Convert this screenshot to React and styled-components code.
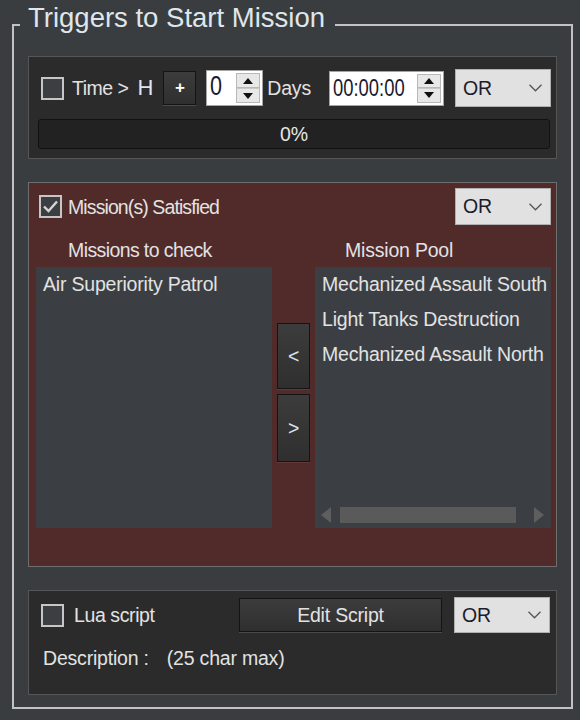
import React from "react";
import styled, { createGlobalStyle } from "styled-components";

const LINE = "#c2c2c2";

const GlobalStyle = createGlobalStyle`
  html, body { margin: 0; padding: 0; background: #3a3d40; }
  body { font-family: "Liberation Sans", Arial, sans-serif; }
  * { box-sizing: border-box; }
`;

const Page = styled.div`
  width: 580px;
  height: 720px;
  background: #3a3d40;
  padding: 3px 7px 0 12px;
  color: #e2e2e2;
  font-size: 19.5px;
  letter-spacing: -0.2px;
  overflow: hidden;
`;

const Header = styled.div`
  display: flex;
  height: 30px;
`;

const Corner = styled.div`
  width: 8px;
  margin-top: 21px;
  border-left: 2px solid ${LINE};
  border-top: 2px solid ${LINE};
`;

const Title = styled.div`
  font-size: 27.5px;
  letter-spacing: 0;
  line-height: 30px;
  padding: 0 10px 0 8px;
  color: #dfe6ec;
  white-space: nowrap;
`;

const RightLine = styled.div`
  flex: 1;
  margin-top: 21px;
  border-top: 2px solid ${LINE};
  border-right: 2px solid ${LINE};
`;

const Body = styled.div`
  border: 2px solid ${LINE};
  border-top: none;
  padding: 23px 14px 12px 14px;
  display: flex;
  flex-direction: column;
  gap: 23px;
`;

const Panel = styled.div`
  border: 1px solid ${(p) => p.$border || "#565656"};
  background: ${(p) => p.$bg || "#2b2b2b"};
  padding: ${(p) => p.$pad};
  display: flex;
  flex-direction: column;
`;

const Row = styled.div`
  display: flex;
  align-items: center;
  height: ${(p) => p.$h || 38}px;
  margin-top: ${(p) => p.$mt || 0}px;
`;

const Label = styled.span`
  margin-left: ${(p) => p.$ml || 0}px;
  font-size: ${(p) => p.$size || 19.5}px;
  letter-spacing: ${(p) => p.$ls ?? -0.2}px;
  color: ${(p) => p.$color || "#e2e2e2"};
  white-space: nowrap;
  line-height: 22px;
`;

const Box = styled.span`
  width: 23px;
  height: 23px;
  margin-left: ${(p) => p.$ml || 0}px;
  border: 2px solid #c6c6c6;
  background: #3c3f42;
  display: flex;
  align-items: center;
  justify-content: center;
  flex-shrink: 0;
`;

const Checkbox = ({ checked, ml }) => (
  <Box $ml={ml}>
    {checked && (
      <svg width="17" height="15" viewBox="0 0 17 15">
        <path d="M2 7.5 L6.5 12 L15 2.5" fill="none" stroke="#d4d4d4" strokeWidth="2.4" />
      </svg>
    )}
  </Box>
);

const DarkButton = styled.button`
  margin-left: ${(p) => (p.$auto ? "auto" : `${p.$ml || 0}px`)};
  width: ${(p) => p.$w}px;
  height: ${(p) => p.$h}px;
  background: linear-gradient(#3c3c3c, #2f2f2f);
  border: 1px solid #141414;
  box-shadow: 0 1px 0 ${(p) => p.$under || "#4a4a4a"};
  color: ${(p) => p.$color || "#e2e2e2"};
  font-family: "Liberation Sans", Arial, sans-serif;
  font-size: ${(p) => p.$size || 19.5}px;
  letter-spacing: -0.2px;
  font-weight: ${(p) => p.$weight || 400};
  padding: 0;
  display: flex;
  align-items: center;
  justify-content: center;
  flex-shrink: 0;
`;

const Spin = styled.div`
  margin-left: ${(p) => p.$ml || 0}px;
  width: ${(p) => p.$w}px;
  height: ${(p) => p.$h}px;
  background: #fff;
  border: 1px solid #a4a4a4;
  display: flex;
  align-items: center;
  flex-shrink: 0;
  overflow: hidden;
`;

const SpinValue = styled.div`
  flex: 1;
  height: 100%;
  display: flex;
  align-items: center;
  padding-left: 3px;
  padding-bottom: ${(p) => p.$lift}px;
  overflow: hidden;
`;

const SpinText = styled.span`
  display: inline-block;
  color: #1a1a2e;
  font-size: ${(p) => p.$size}px;
  letter-spacing: 0;
  line-height: 1;
  white-space: nowrap;
  transform: scaleX(${(p) => p.$sx});
  transform-origin: left center;
`;

const SpinCol = styled.div`
  width: 26px;
  height: 100%;
  display: flex;
  flex-direction: column;
  padding: 2px 2px 2px 0;
`;

const SpinBtn = styled.div`
  flex: 1;
  background: #e8e8e8;
  border: 1px solid #b8b8b8;
  display: flex;
  align-items: center;
  justify-content: center;
  & + & {
    border-top: 1px solid #c8c8c8;
  }
`;

const Arrow = ({ up }) => (
  <svg width="10" height="6" viewBox="0 0 10 6">
    <path d={up ? "M0 6 L5 0 L10 6 Z" : "M0 0 L5 6 L10 0 Z"} fill="#111" />
  </svg>
);

const SpinBox = ({ value, w, h, ml, size, sx, lift }) => (
  <Spin $w={w} $h={h} $ml={ml}>
    <SpinValue $lift={lift}>
      <SpinText $size={size} $sx={sx}>{value}</SpinText>
    </SpinValue>
    <SpinCol>
      <SpinBtn>
        <Arrow up />
      </SpinBtn>
      <SpinBtn>
        <Arrow />
      </SpinBtn>
    </SpinCol>
  </Spin>
);

const ComboBox = styled.div`
  margin-left: ${(p) => (p.$auto ? "auto" : `${p.$ml || 0}px`)};
  width: 96px;
  height: ${(p) => p.$h}px;
  background: #e1e1e1;
  border: 1px solid #b0b0b0;
  display: flex;
  align-items: center;
  justify-content: space-between;
  padding: 0 8px 0 7px;
  color: #1b1b2c;
  font-size: 19.5px;
  flex-shrink: 0;
`;

const Combo = ({ h, ml, auto }) => (
  <ComboBox $h={h} $ml={ml} $auto={auto}>
    <span>OR</span>
    <svg width="13" height="8" viewBox="0 0 13 8">
      <path d="M0.5 0.8 L6.5 6.8 L12.5 0.8" fill="none" stroke="#555" strokeWidth="1.3" />
    </svg>
  </ComboBox>
);

const Progress = styled.div`
  margin-top: 12px;
  height: 30px;
  background: #222222;
  border: 1px solid #121212;
  border-radius: 3px;
  display: flex;
  align-items: center;
  justify-content: center;
  color: #e6e6e6;
`;

const Lists = styled.div`
  margin-top: 14px;
  display: grid;
  grid-template-columns: 236px 33px 1fr;
  grid-template-rows: 22px 261px;
  column-gap: 5px;
  row-gap: 6px;
`;

const ListTitle = styled.div`
  grid-column: ${(p) => p.$col};
  padding-left: ${(p) => p.$pl}px;
  letter-spacing: ${(p) => p.$ls ?? -0.2}px;
  line-height: 22px;
  white-space: nowrap;
`;

const ListBox = styled.div`
  grid-column: ${(p) => p.$col};
  grid-row: 2;
  background: #3b3f43;
  display: flex;
  flex-direction: column;
  overflow: hidden;
`;

const Items = styled.div`
  flex: 1;
`;

const Item = styled.div`
  height: 35px;
  line-height: 35px;
  padding-left: 7px;
  white-space: nowrap;
  overflow: hidden;
  color: #e2e2e2;
`;

const HScroll = styled.div`
  height: 16px;
  margin-bottom: 5px;
  padding: 0 7px 0 6px;
  display: flex;
  align-items: center;
`;

const Track = styled.div`
  flex: 1;
  margin: 0 15px 0 9px;
  height: 16px;
`;

const Thumb = styled.div`
  height: 16px;
  width: 176px;
  background: #5a5a5a;
`;

const Mover = styled.div`
  grid-column: 2;
  grid-row: 2;
  display: flex;
  flex-direction: column;
  justify-content: center;
  gap: 5px;
  padding-bottom: 10px;
`;

const ScrollArrow = ({ left }) => (
  <svg width="10" height="16" viewBox="0 0 10 16">
    <path d={left ? "M10 0 L0 8 L10 16 Z" : "M0 0 L10 8 L0 16 Z"} fill="#5e5e5e" />
  </svg>
);

export default function App() {
  return (
    <>
      <GlobalStyle />
      <Page>
        <Header>
          <Corner />
          <Title>Triggers to Start Mission</Title>
          <RightLine />
        </Header>
        <Body>
          <Panel $pad="12px 6px 9px 9px">
            <Row>
              <Checkbox ml={3} />
              <Label $ml={8} $ls={-0.5}>Time &gt;</Label>
              <Label $ml={9} $size={22} $ls={0} $color="#dbe6f2">H</Label>
              <DarkButton $ml={10} $w={33} $h={34} $size={17} $weight={700} $color="#ffffff">+</DarkButton>
              <SpinBox value="0" w={57} h={36} ml={10} size={27} sx={0.8} lift={4} />
              <Label $ml={4}>Days</Label>
              <SpinBox value="00:00:00" w={115} h={35} ml={18} size={23} sx={0.8} lift={0} />
              <Combo h={38} ml={11} />
            </Row>
            <Progress>0%</Progress>
          </Panel>

          <Panel $pad="5px 5px 38px 7px" $bg="#512a2a" $border="#6e6e6e">
            <Row $h={37}>
              <Checkbox checked ml={3} />
              <Label $ml={6} $ls={-0.9}>Mission(s) Satisfied</Label>
              <Combo h={37} auto />
            </Row>
            <Lists>
              <ListTitle $col={1} $pl={32} $ls={-0.6}>Missions to check</ListTitle>
              <ListTitle $col={3} $pl={30}>Mission Pool</ListTitle>
              <ListBox $col={1}>
                <Items>
                  <Item>Air Superiority Patrol</Item>
                </Items>
              </ListBox>
              <Mover>
                <DarkButton $w={33} $h={66} $color="#d8e2ee" $under="#633838">&lt;</DarkButton>
                <DarkButton $w={33} $h={68} $color="#d8e2ee" $under="#633838">&gt;</DarkButton>
              </Mover>
              <ListBox $col={3}>
                <Items>
                  <Item>Mechanized Assault South</Item>
                  <Item>Light Tanks Destruction</Item>
                  <Item>Mechanized Assault North</Item>
                </Items>
                <HScroll>
                  <ScrollArrow left />
                  <Track>
                    <Thumb />
                  </Track>
                  <ScrollArrow />
                </HScroll>
              </ListBox>
            </Lists>
          </Panel>

          <Panel $pad="6px 6px 25px 12px">
            <Row $h={36}>
              <Checkbox />
              <Label $ml={10} $ls={-0.4}>Lua script</Label>
              <DarkButton $auto $w={203} $h={34}>Edit Script</DarkButton>
              <Combo h={36} ml={12} />
            </Row>
            <Row $h={22} $mt={14}>
              <Label $ml={2}>Description :</Label>
              <Label $ml={18}>(25 char max)</Label>
            </Row>
          </Panel>
        </Body>
      </Page>
    </>
  );
}
